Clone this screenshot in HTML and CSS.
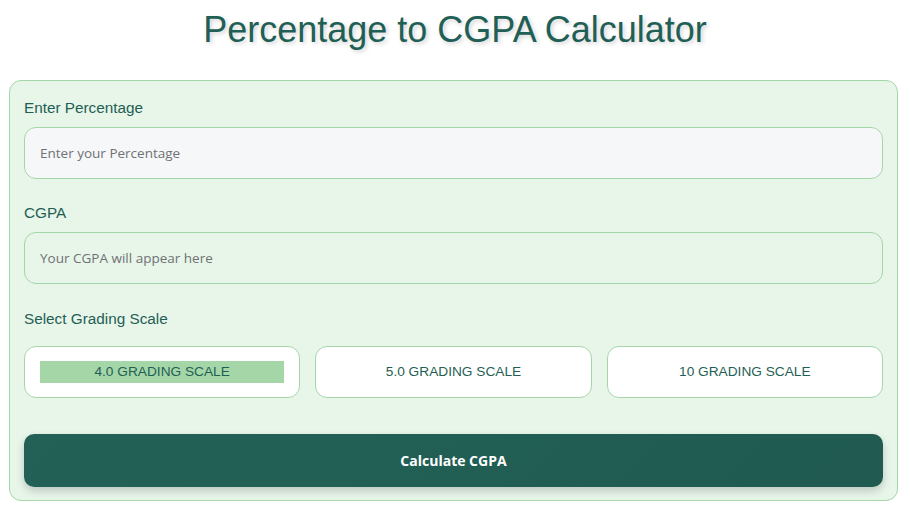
FILE: index.html
```html
<!DOCTYPE html>
<html lang="en">
<head>
<meta charset="utf-8">
<title>Percentage to CGPA Calculator</title>
<link rel="stylesheet" href="styles.css">
</head>
<body>
<h1 class="title">Percentage to CGPA Calculator</h1>
<div class="card">
  <div class="group">
    <label class="label" for="pct">Enter Percentage</label>
    <input class="field field-input" id="pct" type="text" placeholder="Enter your Percentage">
  </div>
  <div class="group group-cgpa">
    <label class="label" for="cgpa">CGPA</label>
    <input class="field field-output" id="cgpa" type="text" placeholder="Your CGPA will appear here" readonly>
  </div>
  <div class="group">
    <div class="label label-scale">Select Grading Scale</div>
    <div class="scales">
      <button class="scale scale-active" type="button"><span class="scale-text">4.0 GRADING SCALE</span></button>
      <button class="scale" type="button"><span class="scale-text">5.0 GRADING SCALE</span></button>
      <button class="scale" type="button"><span class="scale-text">10 GRADING SCALE</span></button>
    </div>
  </div>
  <button class="calc" type="button">Calculate CGPA</button>
</div>
</body>
</html>
```
FILE: styles.css
```css
* { box-sizing: border-box; }

body {
  margin: 0;
  font-family: "Liberation Sans", Arial, sans-serif;
  background: #ffffff;
  color: #1f5f55;
}

.title {
  margin: 9px 0 29px;
  font-size: 36px;
  line-height: 42px;
  font-weight: normal;
  text-align: center;
  color: #1f5f55;
  text-shadow: 2px 2px 4px rgba(0, 0, 0, 0.18);
}

.card {
  margin: 0 12px 0 9px;
  padding: 18px 14px 13px;
  background: #e8f5e9;
  border: 1px solid #a5d6a7;
  border-radius: 12px;
}

.group {
  display: flex;
  flex-direction: column;
}

.group + .group { margin-top: 25px; }
.group-cgpa + .group { margin-top: 26px; }

.label {
  display: block;
  font-size: 15.3px;
  line-height: 17px;
  margin-bottom: 11px;
  color: #1f5f55;
}

.label-scale { margin-bottom: 19px; }

.field {
  display: block;
  width: 100%;
  height: 52px;
  padding: 0 15px;
  border: 1px solid #a5d6a7;
  border-radius: 12px;
  font-family: "Open Sans", "Noto Sans", sans-serif;
  font-size: 13.5px;
  color: #333;
  outline: none;
}

.field::placeholder { color: #6f7275; }

.field-input { background: #f6f7f9; }
.field-output { background: #e8f5e9; }

.scales {
  display: grid;
  grid-template-columns: repeat(3, 1fr);
  gap: 15px;
}

.scale {
  display: block;
  padding: 14px 15px;
  background: #ffffff;
  border: 1px solid #a5d6a7;
  border-radius: 12px;
  font-family: "Liberation Sans", Arial, sans-serif;
  font-size: 13.7px;
  color: #1f5f55;
  cursor: pointer;
}

.scale-text {
  display: block;
  line-height: 22px;
  text-align: center;
}

.scale-active .scale-text { background: #a5d6a7; }

.calc {
  display: block;
  width: 100%;
  height: 53px;
  margin-top: 36px;
  border: none;
  border-radius: 10px;
  background: linear-gradient(135deg, #236056 0%, #215e54 50%, #205a50 100%);
  color: #ffffff;
  font-family: "Open Sans", "Noto Sans", sans-serif;
  font-size: 14px;
  font-weight: bold;
  box-shadow: 0 4px 8px rgba(0, 0, 0, 0.18);
  cursor: pointer;
}
```
